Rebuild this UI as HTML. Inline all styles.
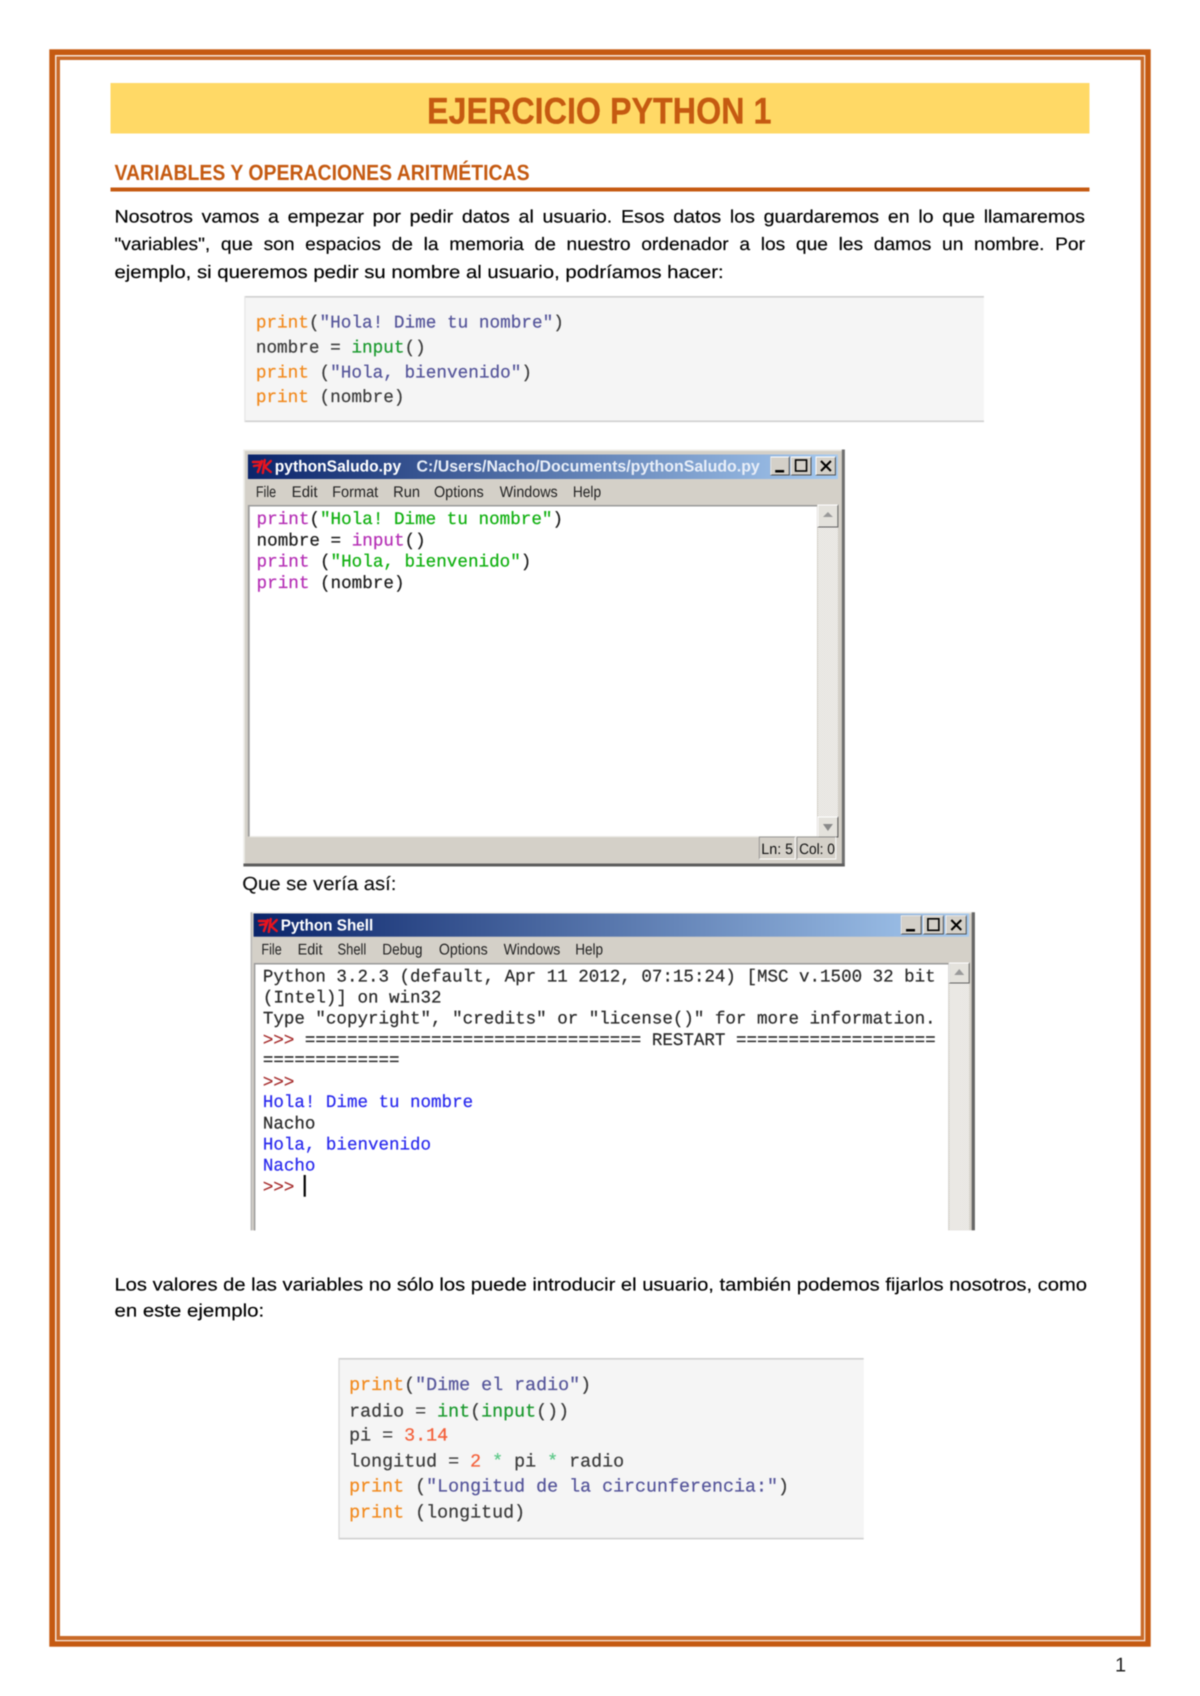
<!DOCTYPE html>
<html lang="es"><head><meta charset="utf-8"><title>Ejercicio Python 1</title>
<style>
html,body{margin:0;padding:0;background:#fff;width:1200px;height:1696px;overflow:hidden}
svg{display:block;position:absolute;left:0;top:0;filter:blur(.4px)}
text{text-rendering:geometricPrecision;white-space:pre}
.s{font-family:"Liberation Sans",sans-serif}
.m{font-family:"Liberation Mono",monospace;stroke-width:.22}
.p{font-size:18px;fill:#000;stroke:#000;stroke-width:.18}
.menu{font-size:15.5px;fill:#222}
.c1{font-size:17.8px;fill:#3c3c3c;stroke:#3c3c3c}
.c2{font-size:18.41px;fill:#3c3c3c;stroke:#3c3c3c}
.w1{font-size:17.72px;fill:#1c1c1c;stroke:#1c1c1c}
.sh{font-size:17.63px;fill:#2a2a2a;stroke:#2a2a2a}
.o{fill:#f28a1e;stroke:#f28a1e}.v{fill:#55559a;stroke:#55559a}.g{fill:#1b9a2f;stroke:#1b9a2f}.r{fill:#f4603a;stroke:#f4603a}.lg{fill:#5fc98a;stroke:#5fc98a}
.mg{fill:#b52fb5;stroke:#b52fb5}.gr{fill:#10b010;stroke:#10b010}
.rd{fill:#a52a2a;stroke:#a52a2a}.bl{fill:#2a2aee;stroke:#2a2aee}
</style></head><body>
<svg width="1200" height="1696" viewBox="0 0 1200 1696" xmlns="http://www.w3.org/2000/svg">
<defs>
<linearGradient id="tb" x1="0" x2="1" y1="0" y2="0"><stop offset="0" stop-color="#0a246a"/><stop offset="1" stop-color="#a6caf0"/></linearGradient>
<pattern id="dith" width="2" height="2" patternUnits="userSpaceOnUse"><rect width="2" height="2" fill="#ffffff"/><rect width="1" height="1" fill="#d4d0c8"/><rect x="1" y="1" width="1" height="1" fill="#d4d0c8"/></pattern>
</defs>
<rect width="1200" height="1696" fill="#fff"/>

<!-- page border -->
<rect x="49.3" y="49.3" width="1101.4" height="1597.4" fill="#c55a11"/>
<rect x="55" y="55" width="1090.3" height="1586.3" fill="#f6e3d5"/>
<rect x="56.5" y="56.5" width="1087.5" height="1583.5" fill="#c96a28"/>
<rect x="60" y="60" width="1080.7" height="1576" fill="#fff"/>

<g transform="scale(.9954 1)">
<!-- title -->
<rect x="111" y="83" width="983.5" height="50.5" fill="#ffd966"/>
<text class="s" x="429" y="123.5" font-size="37" font-weight="700" fill="#c55a11" stroke="#c55a11" stroke-width=".3" textLength="346" lengthAdjust="spacingAndGlyphs">EJERCICIO PYTHON 1</text>

<!-- heading -->
<text class="s" x="115" y="180" font-size="22" font-weight="700" fill="#c55a11" textLength="417" lengthAdjust="spacingAndGlyphs">VARIABLES Y OPERACIONES ARITMÉTICAS</text>
<rect x="111" y="187.5" width="983.5" height="4" fill="#c55a11"/>

<!-- paragraph 1 -->
<text class="s p" x="115" y="222.7" word-spacing="3" textLength="975" lengthAdjust="spacingAndGlyphs">Nosotros vamos a empezar por pedir datos al usuario. Esos datos los guardaremos en lo que llamaremos</text>
<text class="s p" x="115" y="250" word-spacing="5" textLength="975" lengthAdjust="spacingAndGlyphs">"variables", que son espacios de la memoria de nuestro ordenador a los que les damos un nombre. Por</text>
<text class="s p" x="115" y="278" textLength="612" lengthAdjust="spacingAndGlyphs">ejemplo, si queremos pedir su nombre al usuario, podríamos hacer:</text>

<!-- code box 1 -->
<rect x="245.5" y="296" width="743" height="126" rx="2" fill="#f5f5f5"/>
<rect x="245.5" y="296" width="743" height="1.6" fill="#d0d0d0"/>
<rect x="245.5" y="420.5" width="743" height="1.6" fill="#d0d0d0"/>
<rect x="245.5" y="296" width="1" height="126" fill="#e2e2e2"/>
<text class="m c1" x="257" y="327.3"><tspan class="o">print</tspan>(<tspan class="v">"Hola! Dime tu nombre"</tspan>)</text>
<text class="m c1" x="257" y="352.7">nombre = <tspan class="g">input</tspan>()</text>
<text class="m c1" x="257" y="377.7"><tspan class="o">print</tspan> (<tspan class="v">"Hola, bienvenido"</tspan>)</text>
<text class="m c1" x="257" y="402"><tspan class="o">print</tspan> (nombre)</text>

<!-- paragraph 2 -->
<text class="s p" x="115" y="1290.7" textLength="977" lengthAdjust="spacingAndGlyphs">Los valores de las variables no sólo los puede introducir el usuario, también podemos fijarlos nosotros, como</text>
<text class="s p" x="115" y="1316.7" textLength="150.4" lengthAdjust="spacingAndGlyphs">en este ejemplo:</text>

<!-- code box 2 -->
<rect x="340" y="1358" width="527.7" height="181.5" rx="2" fill="#f5f5f5"/>
<rect x="340" y="1358" width="527.7" height="1.6" fill="#d0d0d0"/>
<rect x="340" y="1537.8" width="527.7" height="1.6" fill="#d0d0d0"/>
<rect x="340" y="1358" width="1.2" height="181.5" fill="#d8d8d8"/>
<text class="m c2" x="350.8" y="1390"><tspan class="o">print</tspan>(<tspan class="v">"Dime el radio"</tspan>)</text>
<text class="m c2" x="350.8" y="1416.7">radio = <tspan class="g">int</tspan>(<tspan class="g">input</tspan>())</text>
<text class="m c2" x="350.8" y="1440.7">pi = <tspan class="r">3.14</tspan></text>
<text class="m c2" x="350.8" y="1466.7">longitud = <tspan class="r">2</tspan> <tspan class="lg">*</tspan> pi <tspan class="lg">*</tspan> radio</text>
<text class="m c2" x="350.8" y="1491.7"><tspan class="o">print</tspan> (<tspan class="v">"Longitud de la circunferencia:"</tspan>)</text>
<text class="m c2" x="350.8" y="1517.7"><tspan class="o">print</tspan> (longitud)</text>
</g>

<g transform="translate(230 0) scale(.9949 1) translate(-230 0)">
<!-- window 1 -->
<rect x="243.5" y="449.5" width="604" height="417" fill="#d4d0c8"/>
<rect x="243.5" y="449.5" width="604" height="1.5" fill="#ecebe6"/>
<rect x="243.5" y="449.5" width="1.5" height="417" fill="#ecebe6"/>
<rect x="845" y="449.5" width="3" height="417" fill="#6e6e6e"/>
<rect x="243.5" y="863.5" width="604" height="3" fill="#5e5e5e"/>
<rect x="248" y="454.5" width="593" height="24.5" fill="url(#tb)"/>
<path d="M253 462h9l-4 10M262 461l-3 5M265 460l-2 13M271 461l-6 6 6 5M254 466l6-1" fill="none" stroke="#e8141e" stroke-width="2.4" stroke-linecap="round"/>
<text class="s" x="275" y="471.7" font-size="16" font-weight="700" fill="#fff" textLength="127" lengthAdjust="spacingAndGlyphs">pythonSaludo.py</text>
<text class="s" x="417.5" y="471.7" font-size="16" font-weight="700" fill="#e8eef8" textLength="345" lengthAdjust="spacingAndGlyphs">C:/Users/Nacho/Documents/pythonSaludo.py</text>
<!-- buttons -->
<g>
<rect x="773.6" y="457" width="18.5" height="18" fill="#d4d0c8" stroke="#505050"/><path d="M773.6 475V457H792" fill="none" stroke="#fff"/><rect x="778" y="470" width="9" height="2.5" fill="#000"/>
<rect x="794" y="457" width="20" height="18" fill="#d4d0c8" stroke="#505050"/><path d="M794 475V457H814" fill="none" stroke="#fff"/><rect x="798.5" y="460" width="11" height="11" fill="none" stroke="#000" stroke-width="1.6"/>
<rect x="819" y="457" width="19.5" height="18" fill="#d4d0c8" stroke="#505050"/><path d="M819 475V457H838.5" fill="none" stroke="#fff"/><path d="M824 461l10 10M834 461l-10 10" stroke="#000" stroke-width="2"/>
</g>
<text class="s menu" x="256" y="497" textLength="20.4" lengthAdjust="spacingAndGlyphs">File</text>
<text class="s menu" x="292" y="497" textLength="26" lengthAdjust="spacingAndGlyphs">Edit</text>
<text class="s menu" x="332.6" y="497" textLength="46.4" lengthAdjust="spacingAndGlyphs">Format</text>
<text class="s menu" x="394" y="497" textLength="27" lengthAdjust="spacingAndGlyphs">Run</text>
<text class="s menu" x="435" y="497" textLength="50" lengthAdjust="spacingAndGlyphs">Options</text>
<text class="s menu" x="501" y="497" textLength="58.4" lengthAdjust="spacingAndGlyphs">Windows</text>
<text class="s menu" x="574.6" y="497" textLength="28.4" lengthAdjust="spacingAndGlyphs">Help</text>
<rect x="248" y="505" width="572" height="331.5" fill="#9a9a9a"/>
<rect x="249.8" y="506.5" width="570.2" height="330" fill="#fff"/>
<rect x="249.8" y="836" width="570.2" height="1.2" fill="#ecebe6"/>
<text class="m w1" x="256.7" y="524"><tspan class="mg">print</tspan>(<tspan class="gr">"Hola! Dime tu nombre"</tspan>)</text>
<text class="m w1" x="256.7" y="545.3">nombre = <tspan class="mg">input</tspan>()</text>
<text class="m w1" x="256.7" y="566.7"><tspan class="mg">print</tspan> (<tspan class="gr">"Hola, bienvenido"</tspan>)</text>
<text class="m w1" x="256.7" y="588"><tspan class="mg">print</tspan> (nombre)</text>
<!-- scrollbar -->
<rect x="821" y="505" width="20" height="332" fill="url(#dith)"/>
<rect x="821" y="505" width="20" height="22" fill="#e4e2dc" stroke="#606060" stroke-width="1"/><path d="M821 527V505H841" fill="none" stroke="#fff"/><path d="M831 512l-5 5h10z" fill="#9a9a9a"/>
<rect x="821" y="817" width="20" height="20" fill="#e4e2dc" stroke="#505050" stroke-width="1"/><path d="M821 837V817H841" fill="none" stroke="#fff"/><path d="M826 824h10l-5 7z" fill="#8a8a8a"/>
<!-- status -->
<rect x="762" y="837" width="36" height="22" fill="#d4d0c8" stroke="#8a8a8a" stroke-width=".8"/>
<rect x="800" y="837" width="39" height="22" fill="#d4d0c8" stroke="#8a8a8a" stroke-width=".8"/>
<path d="M762 859h36V837M800 859h39V837" fill="none" stroke="#fff"/>
<text class="s" x="764" y="854" font-size="15" fill="#111" textLength="32" lengthAdjust="spacingAndGlyphs">Ln: 5</text>
<text class="s" x="802" y="854" font-size="15" fill="#111" textLength="36" lengthAdjust="spacingAndGlyphs">Col: 0</text>

<text class="s" x="242.3" y="890" font-size="19" fill="#111" stroke="#111" stroke-width=".15" textLength="155" lengthAdjust="spacingAndGlyphs">Que se vería así:</text>

<!-- window 2 -->
<rect x="250.7" y="912.3" width="728" height="318" fill="#d4d0c8"/>
<rect x="250.7" y="912.3" width="728" height="1.2" fill="#ecebe6"/>
<rect x="250.7" y="912.3" width="1.5" height="318" fill="#b8b8b8"/>
<rect x="975.5" y="912.3" width="3.2" height="318" fill="#666"/>
<rect x="253.7" y="913.5" width="719" height="23.2" fill="url(#tb)"/>
<path d="M259 921h9l-4 10M268 920l-3 5M271 919l-2 13M277 920l-6 6 6 5M260 925l6-1" fill="none" stroke="#e8141e" stroke-width="2.4" stroke-linecap="round"/>
<text class="s" x="281" y="930.7" font-size="16" font-weight="700" fill="#fff" textLength="93" lengthAdjust="spacingAndGlyphs">Python Shell</text>
<rect x="904.7" y="915.7" width="20" height="18.3" fill="#d4d0c8" stroke="#505050"/><path d="M904.7 934V915.7H924.7" fill="none" stroke="#fff"/><rect x="909.5" y="929" width="9" height="2.5" fill="#000"/>
<rect x="927" y="915.7" width="20" height="18.3" fill="#d4d0c8" stroke="#505050"/><path d="M927 934V915.7H947" fill="none" stroke="#fff"/><rect x="931.5" y="918.8" width="11" height="11.5" fill="none" stroke="#000" stroke-width="1.6"/>
<rect x="949.6" y="915.7" width="20.4" height="18.3" fill="#d4d0c8" stroke="#505050"/><path d="M949.6 934V915.7H970" fill="none" stroke="#fff"/><path d="M955 920l10 10M965 920l-10 10" stroke="#000" stroke-width="2"/>
<text class="s menu" x="261.6" y="954.5" textLength="20.4" lengthAdjust="spacingAndGlyphs">File</text>
<text class="s menu" x="298" y="954.5" textLength="25" lengthAdjust="spacingAndGlyphs">Edit</text>
<text class="s menu" x="338" y="954.5" textLength="29" lengthAdjust="spacingAndGlyphs">Shell</text>
<text class="s menu" x="383" y="954.5" textLength="40.5" lengthAdjust="spacingAndGlyphs">Debug</text>
<text class="s menu" x="440" y="954.5" textLength="49" lengthAdjust="spacingAndGlyphs">Options</text>
<text class="s menu" x="505" y="954.5" textLength="57" lengthAdjust="spacingAndGlyphs">Windows</text>
<text class="s menu" x="577" y="954.5" textLength="28" lengthAdjust="spacingAndGlyphs">Help</text>
<rect x="254" y="963" width="698" height="268" fill="#9a9a9a"/>
<rect x="255.5" y="964.5" width="696.5" height="266" fill="#fff"/>
<text class="m sh" x="263" y="981.3">Python 3.2.3 (default, Apr 11 2012, 07:15:24) [MSC v.1500 32 bit</text>
<text class="m sh" x="263" y="1002.3">(Intel)] on win32</text>
<text class="m sh" x="263" y="1023.3">Type "copyright", "credits" or "license()" for more information.</text>
<text class="m sh" x="263" y="1045"><tspan class="rd">&gt;&gt;&gt;</tspan> ================================ RESTART ===================</text>
<text class="m sh" x="263" y="1065">=============</text>
<text class="m sh rd" x="263" y="1087">&gt;&gt;&gt;</text>
<text class="m sh bl" x="263" y="1107">Hola! Dime tu nombre</text>
<text class="m sh" x="263" y="1128.7">Nacho</text>
<text class="m sh bl" x="263" y="1149.3">Hola, bienvenido</text>
<text class="m sh bl" x="263" y="1170.7">Nacho</text>
<text class="m sh rd" x="263" y="1192">&gt;&gt;&gt;</text>
<rect x="304" y="1175" width="2.2" height="21.7" fill="#000"/>
<rect x="953" y="963" width="20" height="268" fill="url(#dith)"/>
<rect x="953" y="963" width="20" height="20" fill="#e4e2dc" stroke="#606060" stroke-width="1"/><path d="M953 983V963H973" fill="none" stroke="#fff"/><path d="M963 969l-5 6h10z" fill="#9a9a9a"/>
<rect x="240" y="1230.5" width="750" height="4" fill="#fff"/>
</g>

<!-- page number -->
<text class="s" x="1115" y="1671.7" font-size="20" fill="#222">1</text>
</svg>
</body></html>
